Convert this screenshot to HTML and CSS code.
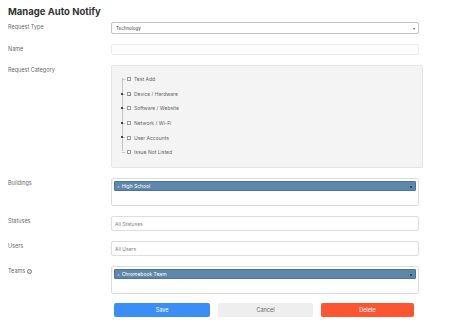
FILE: index.html
```html
<!DOCTYPE html>
<html>
<head>
<meta charset="utf-8">
<link rel="stylesheet" href="styles.css">
</head>
<body>
<div class="page">
  <h1 class="title">Manage Auto Notify</h1>
  <div class="form">
    <div class="label">Request Type</div>
    <div class="select field"><span>Technology</span><span class="arrow">&#9662;</span></div>

    <div class="label">Name</div>
    <div class="input field light"></div>

    <div class="label">Request Category</div>
    <div class="catbox">
      <ul class="tree">
        <li class="leaf"><span class="cb"></span>Test Add</li>
        <li class="node"><span class="cb checked">&#10003;</span>Device / Hardware</li>
        <li class="node"><span class="cb"></span>Software / Website</li>
        <li class="node"><span class="cb"></span>Network / Wi-Fi</li>
        <li class="node"><span class="cb"></span>User Accounts</li>
        <li class="leaf last"><span class="cb"></span>Issue Not Listed</li>
      </ul>
    </div>

    <div class="label">Buildings</div>
    <div class="multi field">
      <div class="tag"><span class="x">&times;</span>High School<span class="clr"></span></div>
    </div>

    <div class="label">Statuses</div>
    <div class="input field ph">All Statuses</div>

    <div class="label">Users</div>
    <div class="input field ph">All Users</div>

    <div class="label">Teams <span class="info">i</span></div>
    <div class="multi field">
      <div class="tag"><span class="x">&times;</span>Chromebook Team<span class="clr"></span></div>
    </div>

    <div></div>
    <div class="buttons">
      <button class="btn save">Save</button>
      <button class="btn cancel">Cancel</button>
      <button class="btn delete">Delete</button>
    </div>
  </div>
</div>
</body>
</html>
```
FILE: styles.css
```css
* { box-sizing: border-box; }
html, body { margin: 0; padding: 0; background: #fff; }
body { font-family: Inter, "Noto Sans", sans-serif; color: #555; }
.page { padding: 5px 0 0 8px; width: 474px; }
.title { margin: 0; font-size: 9.5px; line-height: 13px; font-weight: 700; color: #333; }
.form {
  display: grid;
  grid-template-columns: 103px 308px;
  row-gap: 10px;
  margin-top: 4px;
}
.label { font-size: 5.5px; color: #6a6a6a; padding-top: 2px; line-height: 7px; }
.info {
  display: inline-block; width: 5px; height: 5px; border: 0.6px solid #777; border-radius: 50%;
  font-size: 3.5px; line-height: 4px; text-align: center; vertical-align: 0;
}
.field { border: 1px solid #d9d9d9; border-radius: 2px; background: #fff; }
.select {
  height: 12px; display: flex; align-items: center; justify-content: space-between;
  padding: 0 3px 0 4px; font-size: 4.5px; color: #444; border-color: #c4c4c4;
}
.arrow { font-size: 4px; color: #555; }
.input { height: 11px; }
.light { border-color: #ececec; }
.ph { height: 15px; font-size: 5px; color: #888; display: flex; align-items: center; padding-left: 3px; border-color: #dedede; }
.catbox {
  width: 312px; height: 103px; background: #f4f4f4; border: 1px solid #e5e5e5; border-radius: 2px;
  padding: 6px 0 0 9px;
}
.tree {
  list-style: none; margin: 0; padding: 0; position: relative; font-size: 5px; color: #666;
}
.tree::before {
  content: ""; position: absolute; left: 1px; top: 6px; height: 73px; border-left: 0.6px solid #c4c4c4;
}
.tree li {
  height: 14.6px; display: flex; align-items: center; padding-left: 6px; position: relative;
}
.tree li::before {
  content: ""; position: absolute; left: 1px; top: 7px; width: 3px; border-top: 0.6px solid #c4c4c4;
}
.tree li.node::after {
  content: ""; position: absolute; left: 0; top: 6px; width: 2px; height: 2px; background: #444;
}
.cb {
  width: 4px; height: 4px; border: 0.6px solid #999; background: #fff; margin-right: 3px;
  font-size: 4px; line-height: 3px; text-align: center; color: #444; display: inline-block;
}
.multi { height: 28px; padding: 2px; border-color: #dcdcdc; }
.tag {
  height: 10px; background: #5f87ac; border: 0.6px solid #4b7399; border-radius: 1px;
  color: #fff; font-size: 5px; display: flex; align-items: center; padding-left: 2px; position: relative;
}
.tag .x { font-size: 4px; margin-right: 2px; color: #dfe8f0; }
.clr {
  position: absolute; right: 3px; top: 4px; width: 2px; height: 2px; background: #2f4b66;
}
.buttons { display: flex; gap: 8px; padding-left: 3px; margin-top: -1px; }
.btn {
  width: 96px; height: 14px; border: none; border-radius: 2px; font-family: inherit;
  font-size: 5.5px; padding: 0; color: #fff;
}
.save { background: #3b8ef5; }
.cancel { background: #eeeeee; color: #666; width: 95px; }
.delete { background: #fb5631; width: 93px; }
```
